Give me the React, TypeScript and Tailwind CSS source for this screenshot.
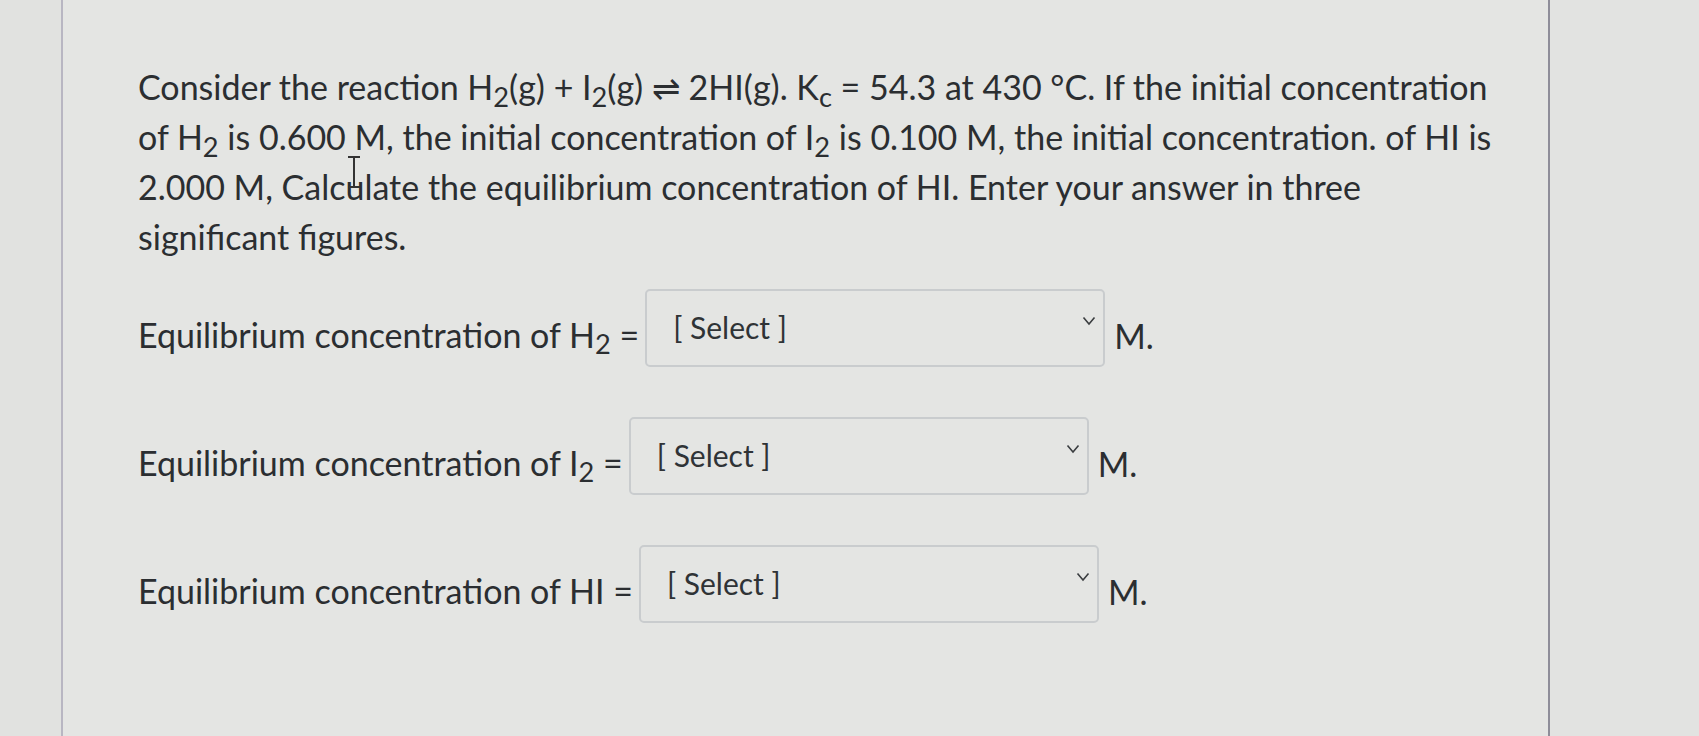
import React from "react";

const Sub = ({ children }: { children: React.ReactNode }) => (
  <sub className="text-[0.8em]">{children}</sub>
);

const SelectBox = ({ className = "" }: { className?: string }) => (
  <div
    className={`w-[460px] h-[78px] shrink-0 border-2 border-[#c9ccce] rounded-[5px] flex items-center justify-between pl-[26px] pr-[7px] ${className}`}>
    <span className="text-[30px] leading-none text-[#2f3336] -mt-[2px]">[ Select ]</span>
    <svg className="w-[14px] h-[10px] -mt-[14px]" viewBox="0 0 14 10" fill="none">
      <path d="M1.5 1.5l5.5 6.5 5.5-6.5" stroke="#3a3d40" strokeWidth={1.6} />
    </svg>
  </div>
);

const Row = ({ label, offset }: { label: React.ReactNode; offset: string }) => (
  <div className="flex items-center">
    <span className="whitespace-nowrap mt-[13px]">{label}</span>
    <SelectBox className={offset} />
    <span className="ml-[9px] mt-[16px]">M.</span>
  </div>
);

export default function App() {
  return (
    <div
      className="w-full h-[736px] bg-[#e4e5e3] flex text-[#2b2e31] overflow-hidden"
      style={{ fontFamily: "Lato, 'Open Sans', sans-serif" }}>
      <div className="w-[61px] shrink-0 bg-[#e1e2e0]" />
      <div className="w-[2px] shrink-0 bg-[#b8b6c2]" />
      <div className="flex-1 relative pl-[75px] pt-[62px] text-[34px] leading-[50px]">
        <p className="whitespace-nowrap">
          Consider the reaction H<Sub>2</Sub>(g) + I<Sub>2</Sub>(g) ⇌ 2HI(g). K
          <Sub>c</Sub> = 54.3 at 430 °C. If the initial concentration
          <br />
          of H<Sub>2</Sub> is 0.600 M, the initial concentration of I<Sub>2</Sub>{" "}
          is 0.100 M, the initial concentration. of HI is
          <br />
          2.000 M, Calculate the equilibrium concentration of HI. Enter your
          answer in three
          <br />
          significant figures.
        </p>

        {/* text cursor */}
        <svg
          className="absolute left-[284px] top-[156px] w-[14px] h-[32px]"
          viewBox="0 0 14 32"
          fill="none">
          <path d="M1 1h12M7 1v30M1 31h12" stroke="#333" strokeWidth={2} />
        </svg>

        <div className="mt-[27px] flex flex-col gap-[50px]">
          <Row
            label={
              <>
                Equilibrium concentration of H<Sub>2</Sub> =
              </>
            }
            offset="ml-[6px]"
          />
          <Row
            label={
              <>
                Equilibrium concentration of I<Sub>2</Sub> =
              </>
            }
            offset="ml-[6px]"
          />
          <Row label={<>Equilibrium concentration of HI =</>} offset="ml-[6px]" />
        </div>
      </div>
      <div className="w-[2px] shrink-0 bg-[#8e8d99]" />
      <div className="w-[149px] shrink-0 bg-[#e2e3e1]" />
    </div>
  );
}
